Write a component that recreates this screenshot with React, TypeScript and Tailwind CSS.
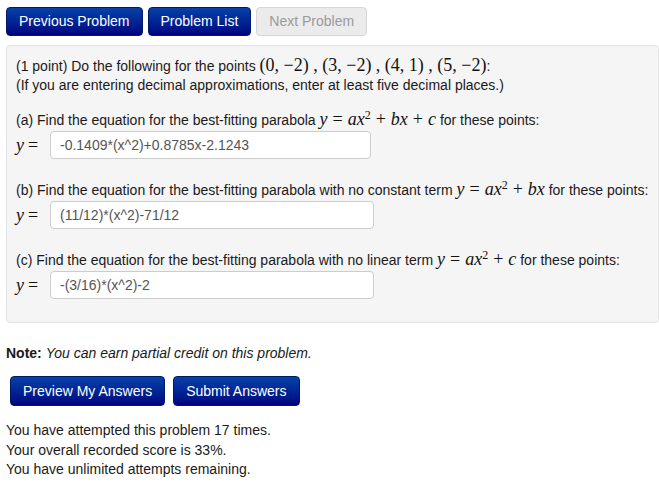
import type { ReactNode } from 'react'

const serif = { fontFamily: '"Liberation Serif", "Times New Roman", serif' }

function M({ children }: { children: ReactNode }) {
  return (
    <span className="text-[18px] leading-none text-[#111]" style={serif}>
      {children}
    </span>
  )
}

const V = ({ c }: { c: string }) => <i>{c}</i>

function Op({ c }: { c: string }) {
  return <span className="mx-[5px]">{c}</span>
}

const Sq = () => <sup className="text-[12px]">2</sup>

function Answer({ value, wide }: { value: string; wide?: boolean }) {
  return (
    <div className="mt-[1px] flex items-center gap-[6px]">
      <span className="w-[28px] text-[18px] leading-none text-[#111]" style={serif}>
        <i>y</i>
        <span className="ml-[4px]">=</span>
      </span>
      <div
        className={`flex h-[28px] items-center rounded-[4px] border border-[#ccc] bg-white px-[9px] text-[14px] text-[#555] ${wide ? 'w-[324px]' : 'w-[321px]'}`}
      >
        {value}
      </div>
    </div>
  )
}

const primary =
  'h-[29px] rounded-[4px] border border-[#001a66] bg-gradient-to-b from-[#0b3fa8] to-[#000080] px-[12px] text-[14px] text-white'

export default function App() {
  return (
    <div
      className="min-h-[487px] bg-white pl-[6px] pt-[7px] text-[14px] leading-[19px] text-[#1a1a1a]"
      style={{ fontFamily: '"Liberation Sans", Arial, sans-serif' }}
    >
      <div className="flex gap-[5px]">
        <button className={primary}>Previous Problem</button>
        <button className={primary}>Problem List</button>
        <button className="h-[29px] rounded-[4px] border border-[#d6d6d6] bg-[#ebebeb] px-[12px] text-[14px] text-[#9a9a9a]">
          Next Problem
        </button>
      </div>

      <div className="mt-[9px] rounded-[4px] border border-[#e3e3e3] bg-[#f5f5f5] pb-[23px] pl-[9px] pr-[2px] pt-[10px]">
        <p>
          (1 point) Do the following for the points{' '}
          <M>(0, −2) , (3, −2) , (4, 1) , (5, −2)</M>:
        </p>
        <p>(If you are entering decimal approximations, enter at least five decimal places.)</p>

        <p className="mt-[15px]">
          (a) Find the equation for the best-fitting parabola{' '}
          <M>
            <V c="y" />
            <Op c="=" />
            <V c="ax" />
            <Sq />
            <Op c="+" />
            <V c="bx" />
            <Op c="+" />
            <V c="c" />
          </M>{' '}
          for these points:
        </p>
        <Answer value="-0.1409*(x^2)+0.8785x-2.1243" />

        <p className="mt-[21px] whitespace-nowrap">
          (b) Find the equation for the best-fitting parabola with no constant term{' '}
          <M>
            <V c="y" />
            <Op c="=" />
            <V c="ax" />
            <Sq />
            <Op c="+" />
            <V c="bx" />
          </M>{' '}
          for these points:
        </p>
        <Answer value="(11/12)*(x^2)-71/12" wide />

        <p className="mt-[21px]">
          (c) Find the equation for the best-fitting parabola with no linear term{' '}
          <M>
            <V c="y" />
            <Op c="=" />
            <V c="ax" />
            <Sq />
            <Op c="+" />
            <V c="c" />
          </M>{' '}
          for these points:
        </p>
        <Answer value="-(3/16)*(x^2)-2" wide />
      </div>

      <p className="mt-[21px]">
        <b>Note:</b> <i>You can earn partial credit on this problem.</i>
      </p>

      <div className="ml-[4px] mt-[13px] flex gap-[8px]">
        <button className={primary + ' h-[30px]'}>Preview My Answers</button>
        <button className={primary + ' h-[30px]'}>Submit Answers</button>
      </div>

      <div className="mt-[15px] leading-[19.5px]">
        <p>You have attempted this problem 17 times.</p>
        <p>Your overall recorded score is 33%.</p>
        <p>You have unlimited attempts remaining.</p>
      </div>
    </div>
  )
}
